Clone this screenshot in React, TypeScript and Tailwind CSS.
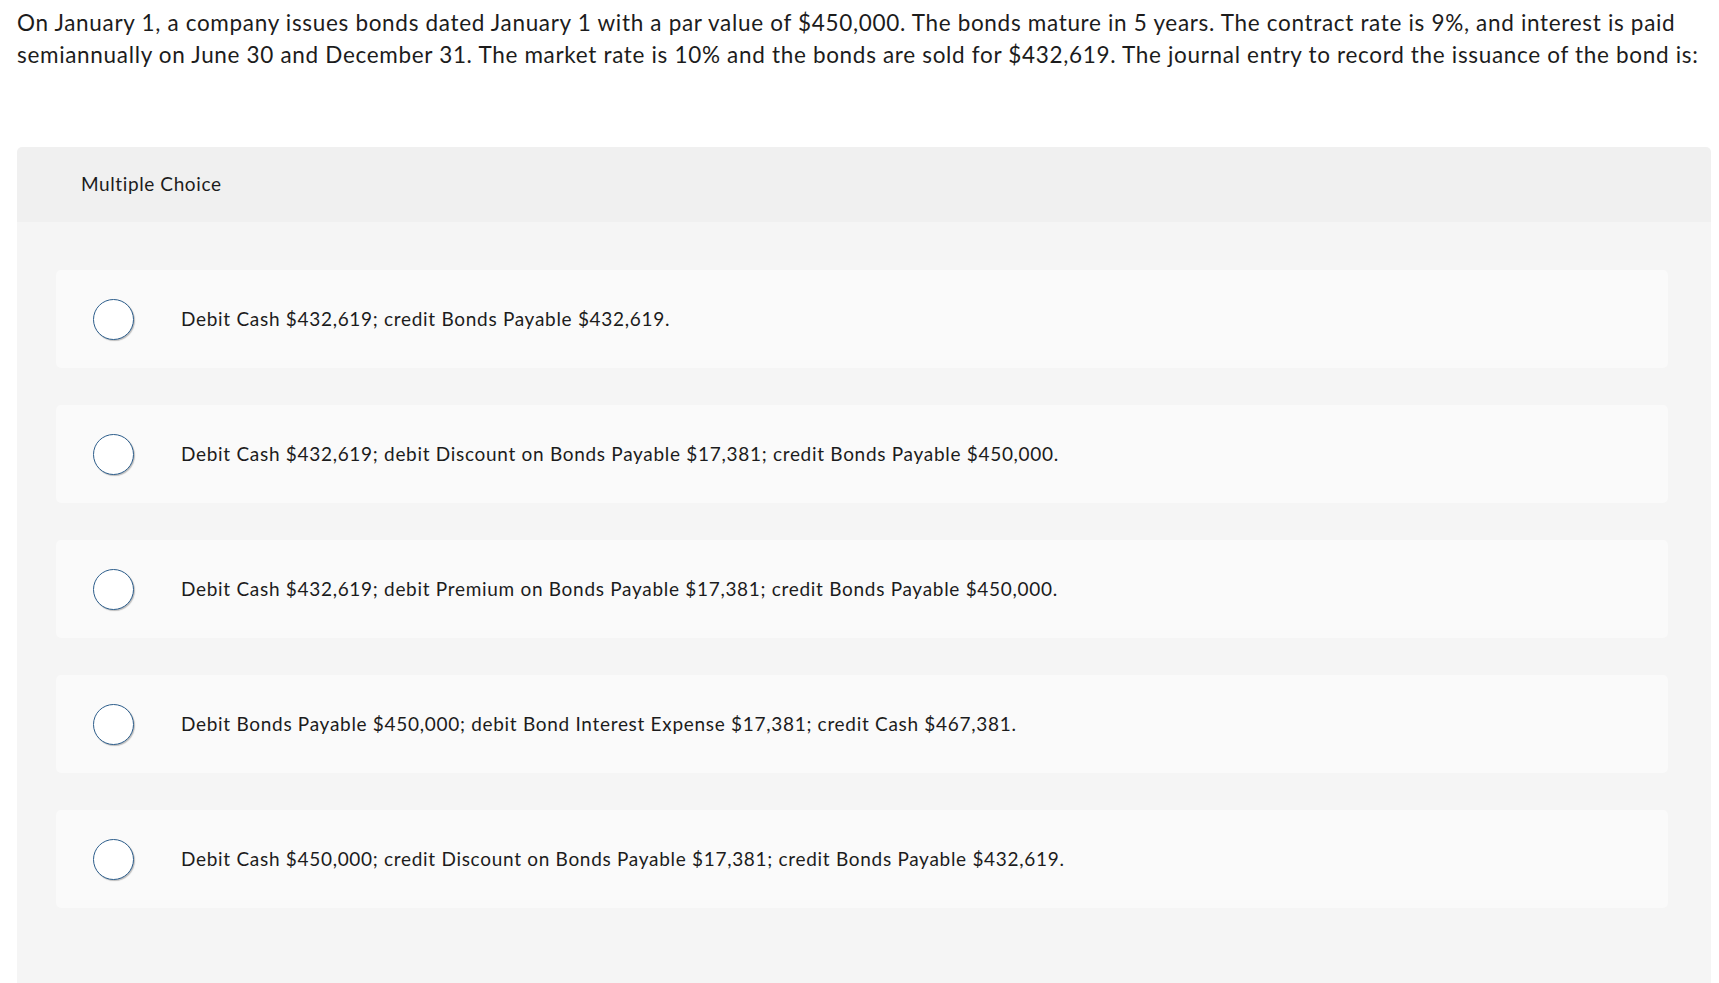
const options = [
  'Debit Cash $432,619; credit Bonds Payable $432,619.',
  'Debit Cash $432,619; debit Discount on Bonds Payable $17,381; credit Bonds Payable $450,000.',
  'Debit Cash $432,619; debit Premium on Bonds Payable $17,381; credit Bonds Payable $450,000.',
  'Debit Bonds Payable $450,000; debit Bond Interest Expense $17,381; credit Cash $467,381.',
  'Debit Cash $450,000; credit Discount on Bonds Payable $17,381; credit Bonds Payable $432,619.',
];

export default function App() {
  return (
    <div
      className="min-h-screen bg-white text-[#1c1c1c] pl-[17px] pr-[8px] pt-[7px]"
      style={{ fontFamily: 'Lato, "Open Sans", sans-serif' }}
    >
      <p className="text-[22.5px] leading-[32px] tracking-[0.68px]">
        On January 1, a company issues bonds dated January 1 with a par value of $450,000. The bonds mature in 5
        years. The contract rate is 9%, and interest is paid semiannually on June 30 and December 31. The market
        rate is 10% and the bonds are sold for $432,619. The journal entry to record the issuance of the bond is:
      </p>

      <div className="mt-[76px] rounded-t-[5px] overflow-hidden">
        <div className="h-[75px] bg-[#f0f0f0] flex items-center pl-[64px]">
          <span className="text-[19px] tracking-[0.6px]">Multiple Choice</span>
        </div>
        <div className="bg-[#f5f5f5] pt-[48px] pl-[39px] pr-[43px] pb-[80px] flex flex-col gap-[37px]">
          {options.map((opt) => (
            <label
              key={opt}
              className="h-[98px] bg-[#fafafa] rounded-[5px] flex items-center pl-[37px] cursor-pointer"
            >
              <span className="w-[41px] h-[41px] shrink-0 rounded-full bg-white border-[1.5px] border-[#2d5e8c] shadow-[1px_1px_1px_rgba(0,0,0,0.25)]" />
              <span className="ml-[47px] text-[19px] tracking-[0.7px]">{opt}</span>
            </label>
          ))}
        </div>
      </div>
    </div>
  );
}
